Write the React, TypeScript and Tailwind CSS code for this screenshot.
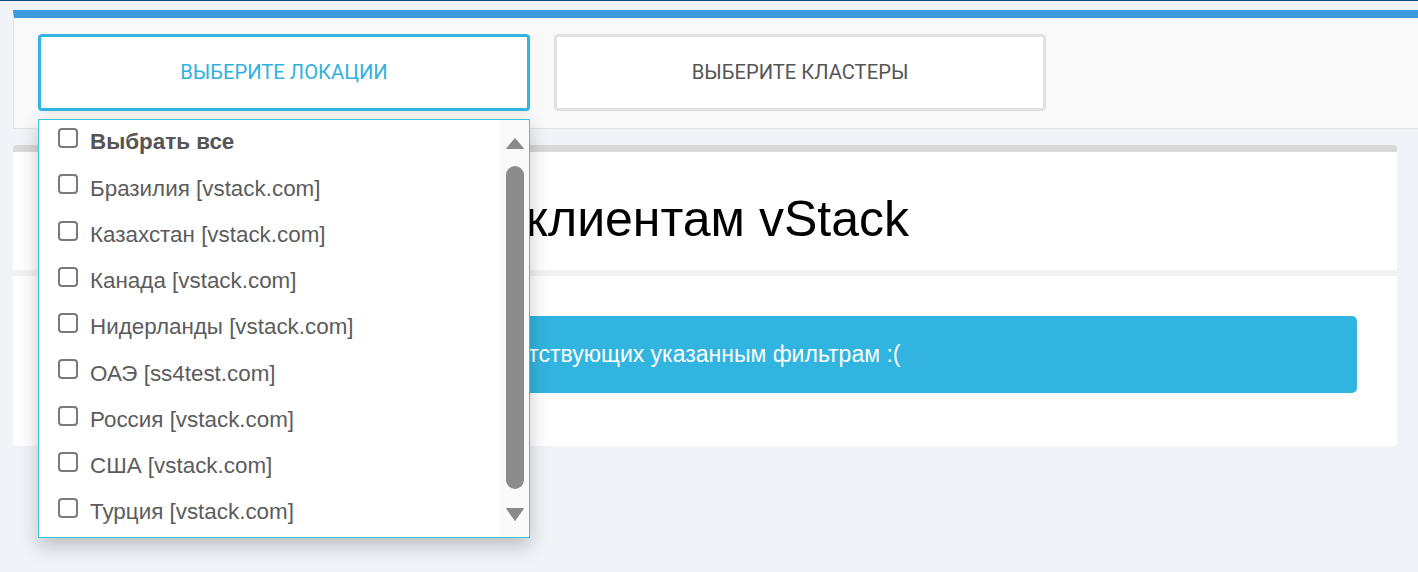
import React from "react";

const locations = [
  "Бразилия [vstack.com]",
  "Казахстан [vstack.com]",
  "Канада [vstack.com]",
  "Нидерланды [vstack.com]",
  "ОАЭ [ss4test.com]",
  "Россия [vstack.com]",
  "США [vstack.com]",
  "Турция [vstack.com]",
];

function Box() {
  return (
    <span className="mt-[-8px] block h-[20px] w-[20px] shrink-0 rounded-[4px] border-2 border-[#7a7a7a] bg-white" />
  );
}

function LocationMenu() {
  return (
    <div className="absolute left-[38px] top-[118px] z-10 h-[419px] w-[492px] overflow-hidden border border-[#3cc3dd] bg-white shadow-[0_8px_18px_rgba(0,0,0,0.22)]">
      <ul className="mt-[-1px] flex flex-col pr-[32px] text-[22.4px]">
        <li className="flex h-[46.25px] items-center gap-[12px] pl-[19px] font-bold text-[#555]">
          <Box />
          <span>Выбрать все</span>
        </li>
        {locations.map((name) => (
          <li key={name} className="flex h-[46.25px] items-center gap-[12px] pl-[19px] text-[#5c5c5c]">
            <Box />
            <span>{name}</span>
          </li>
        ))}
      </ul>
      {/* custom scrollbar */}
      <div className="absolute right-0 top-0 flex h-full w-[30px] flex-col items-center bg-[#fafafa] pt-[18px] pb-[16px] pl-[7px] pr-[5px]">
        <svg width="18" height="11" viewBox="0 0 18 11" className="shrink-0">
          <path d="M9 0.5 L17.5 10.5 L0.5 10.5 Z" fill="#8a8a8a" strokeLinejoin="round" stroke="#8a8a8a" />
        </svg>
        <div className="mt-[17px] h-[323px] w-[18px] rounded-full bg-[#8c8c8c]" />
        <div className="flex-1" />
        <svg width="18" height="13" viewBox="0 0 18 13" className="shrink-0">
          <path d="M0.5 0.5 L17.5 0.5 L9 12.5 Z" fill="#8a8a8a" strokeLinejoin="round" stroke="#8a8a8a" />
        </svg>
      </div>
    </div>
  );
}

export default function App() {
  return (
    <div
      className="relative min-h-[572px] border-t border-[#0e4a78] bg-[#f0f3f8] pt-[9px] pl-[13px]"
      style={{ fontFamily: '"Liberation Sans", Arial, sans-serif', fontSize: 20 }}
    >
      {/* filter panel */}
      <div className="border-t-[8px] border-l border-b border-[#e3e3e3] border-t-[#3a9bdc] bg-[#f9f9f9] pl-[24px] pt-[16px] pb-[17px]">
        <div className="flex gap-[24px]" style={{ fontFamily: 'Roboto, "Liberation Sans", sans-serif' }}>
          <button className="flex h-[77px] w-[492px] items-center justify-center rounded-[4px] border-[3px] border-[#31b4e2] bg-white text-[20.2px] uppercase text-[#31b0e0] shadow-[0_2px_4px_rgba(0,0,0,0.06)]">
            Выберите локации
          </button>
          <button className="flex h-[77px] w-[492px] items-center justify-center rounded-[4px] border-[3px] border-[#e1e1e1] bg-white text-[20.2px] uppercase text-[#555]">
            Выберите кластеры
          </button>
        </div>
      </div>

      {/* news card */}
      <div className="mt-[16px] mr-[21px] overflow-hidden rounded-[4px] border-t-[7px] border-[#d9d9d9] bg-white">
        <div className="flex h-[118px] items-center pl-[186px] pt-[16px]">
          <h1 className="text-[50px] text-black">Уведомления клиентам vStack</h1>
        </div>
        <div className="h-[6px] bg-[#f2f2f2]" />
        <div className="px-[40px] pt-[40px] pb-[53px]">
          <div className="flex h-[77px] items-center rounded-[5px] bg-[#31b4e0] pl-[20px] text-[23px] text-white">
            Нет опубликованных уведомлений, соответствующих указанным фильтрам :(
          </div>
        </div>
      </div>

      <LocationMenu />
    </div>
  );
}
